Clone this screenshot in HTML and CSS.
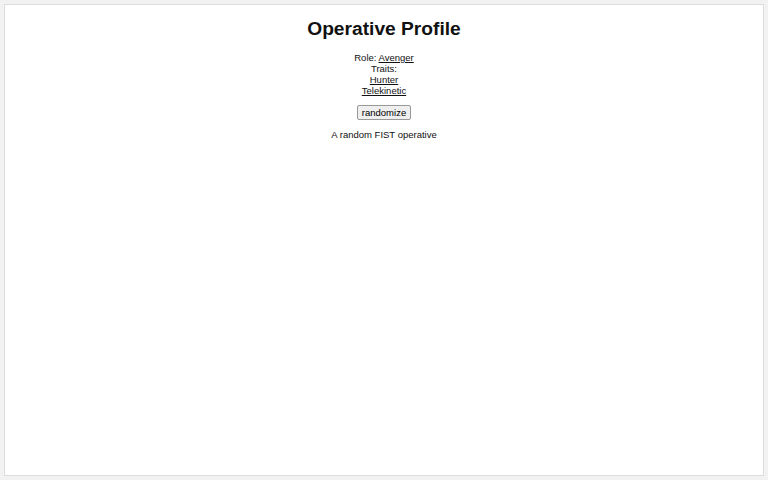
FILE: index.html
```html
<!DOCTYPE html>
<html lang="en">
<head>
  <meta charset="UTF-8">
  <meta name="viewport" content="width=device-width, initial-scale=1.0">
  <title>Operative Profile</title>
  <link rel="stylesheet" href="styles.css">
</head>
<body>
  <div class="card">
    <h1>Operative Profile</h1>

    <div class="profile">
      <div>Role: <a href="#" id="role">Avenger</a></div>
      <div>Traits:</div>
      <div id="traits">
        <div><a href="#">Hunter</a></div>
        <div><a href="#">Telekinetic</a></div>
      </div>
    </div>

    <button id="randomize-btn">randomize</button>

    <p class="caption">A random FIST operative</p>
  </div>
</body>
</html>
```

FILE: styles.css
```css
html, body {
  height: 100%;
}
body {
  font-family: 'Liberation Sans', Arial, sans-serif;
  font-size: 9.5px;
  line-height: 11px;
  margin: 0;
  padding: 4px;
  box-sizing: border-box;
  background-color: #f2f2f2;
  color: #111;
}
.card {
  box-sizing: border-box;
  height: 100%;
  background-color: #fff;
  border: 1px solid #dcdcdc;
  text-align: center;
  padding-top: 13px;
}
h1 {
  font-size: 19.2px;
  line-height: 22px;
  margin: 0 0 12px;
}
.profile a {
  color: #111;
}
button {
  font-family: 'Liberation Sans', Arial, sans-serif;
  font-size: 9.5px;
  line-height: 11px;
  margin-top: 9px;
  padding: 1px 4px;
  background-color: #efefef;
  border: 1px solid #999;
  border-radius: 2px;
}
.caption {
  margin: 9px 0 0;
}
```
